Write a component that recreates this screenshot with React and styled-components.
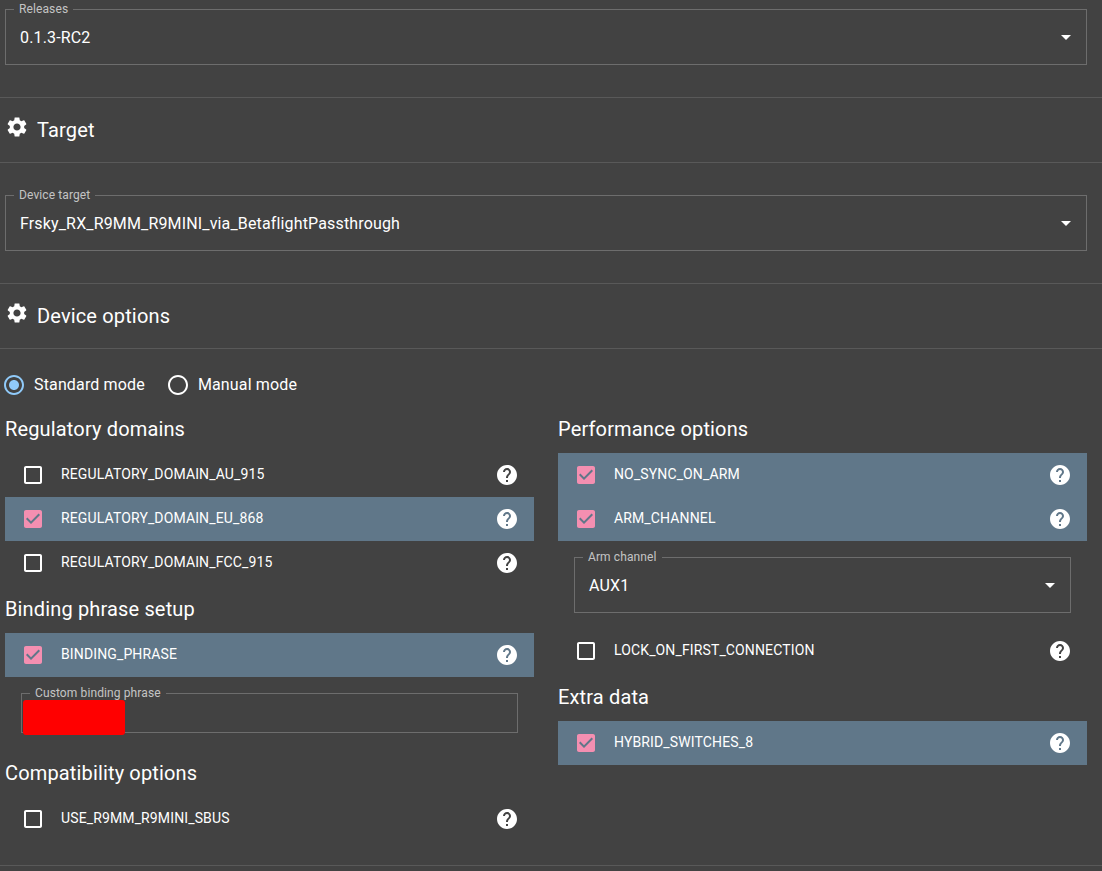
import styled, { createGlobalStyle } from "styled-components";

const GlobalStyle = createGlobalStyle`
  html, body {
    margin: 0;
    background: #424242;
    color: #fff;
    font-family: Roboto, "Liberation Sans", sans-serif;
  }
`;

const Page = styled.div`
  width: 1102px;
  height: 871px;
  overflow: hidden;
  padding-top: 9px;
  box-sizing: border-box;
`;

const Divider = styled.hr`
  margin: ${(p) => p.$top || 0}px 0 ${(p) => p.$bottom || 0}px;
  border: 0;
  height: 1px;
  background: rgba(255, 255, 255, 0.12);
`;

const Header = styled.div`
  display: flex;
  align-items: flex-start;
  height: 64px;
  padding: 17px 0 0 5px;
  box-sizing: border-box;
  gap: 8px;
`;

const HeaderTitle = styled.h2`
  margin: 3px 0 0;
  font-size: 20px;
  line-height: 24px;
  font-weight: 400;
  letter-spacing: 0.15px;
`;

const Content = styled.div`
  padding: 0 15px 0 5px;
`;

const Field = styled.div`
  position: relative;
  display: flex;
  align-items: center;
  justify-content: space-between;
  box-sizing: border-box;
  height: ${(p) => p.$height || 56}px;
  margin: ${(p) => p.$margin || "0"};
  padding: 0 8px 0 14px;
  border: 1px solid rgba(255, 255, 255, 0.23);
`;

const FieldLabel = styled.span`
  position: absolute;
  top: -8px;
  left: 8px;
  padding: 0 5px;
  background: #424242;
  font-size: 12px;
  line-height: 14px;
  letter-spacing: 0.11px;
  color: rgba(255, 255, 255, 0.7);
`;

const FieldValue = styled.span`
  padding-top: 1px;
  font-size: 16px;
  line-height: 24px;
  letter-spacing: 0.15px;
`;

const Redaction = styled.div`
  position: absolute;
  left: 1px;
  top: 6px;
  width: 102px;
  height: 35px;
  border-radius: 3px;
  background: #ff0000;
`;

const RadioGroup = styled.div`
  display: flex;
  align-items: center;
  height: 40px;
  margin: 16px 0 0 -3px;
  gap: 21px;
`;

const RadioOption = styled.label`
  display: flex;
  align-items: center;
  gap: 8px;
  font-size: 16px;
  line-height: 24px;
  letter-spacing: 0.15px;
`;

const Columns = styled.div`
  display: grid;
  grid-template-columns: 529px 529px;
  column-gap: 24px;
`;

const Column = styled.div`
  display: flex;
  flex-direction: column;
`;

const GroupTitle = styled.h3`
  margin: 8px 0;
  height: 32px;
  font-size: 20px;
  line-height: 32px;
  font-weight: 400;
  letter-spacing: 0.15px;
`;

const OptionRow = styled.div`
  display: flex;
  align-items: center;
  height: 44px;
  padding: 0 15.5px 0 16px;
  gap: 16px;
  background: ${(p) => (p.$active ? "#607789" : "transparent")};
`;

const OptionName = styled.span`
  flex: 1;
  margin-top: -2px;
  font-size: 14px;
  line-height: 20px;
  letter-spacing: 0.13px;
`;

const Icon = styled.svg`
  display: block;
  flex: none;
  width: 24px;
  height: 24px;
  fill: ${(p) => p.$color || "#fff"};
`;

const GEAR =
  "M19.14 12.94c.04-.3.06-.61.06-.94 0-.32-.02-.64-.07-.94l2.03-1.58c.18-.14.23-.41.12-.61l-1.92-3.32c-.12-.22-.37-.29-.59-.22l-2.39.96c-.5-.38-1.03-.7-1.62-.94l-.36-2.54c-.04-.24-.24-.41-.48-.41h-3.84c-.24 0-.43.17-.47.41l-.36 2.54c-.59.24-1.13.57-1.62.94l-2.39-.96c-.22-.08-.47 0-.59.22L2.74 8.87c-.12.21-.08.47.12.61l2.03 1.58c-.05.3-.09.63-.09.94s.02.64.07.94l-2.03 1.58c-.18.14-.23.41-.12.61l1.92 3.32c.12.22.37.29.59.22l2.39-.96c.5.38 1.03.7 1.62.94l.36 2.54c.05.24.24.41.48.41h3.84c.24 0 .44-.17.47-.41l.36-2.54c.59-.24 1.13-.56 1.62-.94l2.39.96c.22.08.47 0 .59-.22l1.92-3.32c.12-.22.07-.47-.12-.61l-2.01-1.58zM12 15.6c-1.98 0-3.6-1.62-3.6-3.6s1.62-3.6 3.6-3.6 3.6 1.62 3.6 3.6-1.62 3.6-3.6 3.6z";
const HELP =
  "M12 2C6.48 2 2 6.48 2 12s4.48 10 10 10 10-4.48 10-10S17.52 2 12 2zm1 17h-2v-2h2v2zm2.07-7.75l-.9.92C13.45 12.9 13 13.5 13 15h-2v-.5c0-1.1.45-2.1 1.17-2.83l1.24-1.26c.37-.36.59-.86.59-1.41 0-1.1-.9-2-2-2s-2 .9-2 2H8c0-2.21 1.79-4 4-4s4 1.79 4 4c0 .88-.36 1.68-.93 2.25z";
const BOX_EMPTY =
  "M19 5v14H5V5h14m0-2H5c-1.1 0-2 .9-2 2v14c0 1.1.9 2 2 2h14c1.1 0 2-.9 2-2V5c0-1.1-.9-2-2-2z";
const BOX_CHECKED =
  "M19 3H5c-1.11 0-2 .9-2 2v14c0 1.1.89 2 2 2h14c1.11 0 2-.9 2-2V5c0-1.1-.89-2-2-2zm-9 14l-5-5 1.41-1.41L10 14.17l7.59-7.59L19 8l-9 9z";
const RING =
  "M12 2C6.48 2 2 6.48 2 12s4.48 10 10 10 10-4.48 10-10S17.52 2 12 2zm0 18c-4.42 0-8-3.58-8-8s3.58-8 8-8 8 3.58 8 8-3.58 8-8 8z";
const DOT = "M12 7c-2.76 0-5 2.24-5 5s2.24 5 5 5 5-2.24 5-5-2.24-5-5-5z";

const Glyph = ({ d, color }) => (
  <Icon viewBox="0 0 24 24" $color={color}>
    <path d={d} />
  </Icon>
);

const Select = ({ label, value, margin }) => (
  <Field $margin={margin}>
    <FieldLabel>{label}</FieldLabel>
    <FieldValue>{value}</FieldValue>
    <Glyph d="M7 10l5 5 5-5z" />
  </Field>
);

const SectionHeader = ({ title }) => (
  <Header>
    <Glyph d={GEAR} />
    <HeaderTitle>{title}</HeaderTitle>
  </Header>
);

const Option = ({ name, checked }) => (
  <OptionRow $active={checked}>
    <Glyph d={checked ? BOX_CHECKED : BOX_EMPTY} color={checked ? "#f48fb1" : "#fff"} />
    <OptionName>{name}</OptionName>
    <Glyph d={HELP} />
  </OptionRow>
);

const Radio = ({ label, checked }) => (
  <RadioOption>
    <Icon viewBox="0 0 24 24" $color={checked ? "#90caf9" : "#fff"}>
      <path d={RING} />
      {checked && <path d={DOT} />}
    </Icon>
    {label}
  </RadioOption>
);

export default function App() {
  return (
    <>
      <GlobalStyle />
      <Page>
        <Content>
          <Select label="Releases" value="0.1.3-RC2" />
        </Content>
        <Divider $top={32} />
        <SectionHeader title="Target" />
        <Divider $bottom={32} />
        <Content>
          <Select
            label="Device target"
            value="Frsky_RX_R9MM_R9MINI_via_BetaflightPassthrough"
          />
        </Content>
        <Divider $top={32} />
        <SectionHeader title="Device options" />
        <Divider />
        <Content>
          <RadioGroup>
            <Radio label="Standard mode" checked />
            <Radio label="Manual mode" />
          </RadioGroup>
          <Columns>
            <Column>
              <GroupTitle>Regulatory domains</GroupTitle>
              <Option name="REGULATORY_DOMAIN_AU_915" />
              <Option name="REGULATORY_DOMAIN_EU_868" checked />
              <Option name="REGULATORY_DOMAIN_FCC_915" />
              <GroupTitle>Binding phrase setup</GroupTitle>
              <Option name="BINDING_PHRASE" checked />
              <Field $height={40} $margin="16px 16px 16px">
                <FieldLabel>Custom binding phrase</FieldLabel>
                <Redaction />
              </Field>
              <GroupTitle>Compatibility options</GroupTitle>
              <Option name="USE_R9MM_R9MINI_SBUS" />
            </Column>
            <Column>
              <GroupTitle>Performance options</GroupTitle>
              <Option name="NO_SYNC_ON_ARM" checked />
              <Option name="ARM_CHANNEL" checked />
              <Select label="Arm channel" value="AUX1" margin="16px 16px 16px" />
              <Option name="LOCK_ON_FIRST_CONNECTION" />
              <GroupTitle>Extra data</GroupTitle>
              <Option name="HYBRID_SWITCHES_8" checked />
            </Column>
          </Columns>
        </Content>
        <Divider $top={24} />
      </Page>
    </>
  );
}
